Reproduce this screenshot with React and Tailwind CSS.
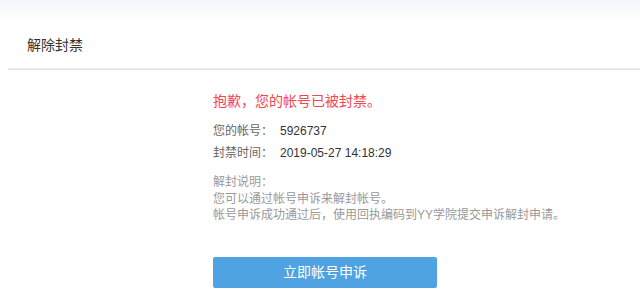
import React from 'react';

const font = { fontFamily: '"Liberation Sans", "Noto Sans CJK SC", sans-serif' };

export default function App() {
  const info = [
    { label: '您的帐号：', value: '5926737' },
    { label: '封禁时间：', value: '2019-05-27 14:18:29' },
  ];

  return (
    <div className="w-[640px] h-[297px] overflow-hidden bg-white" style={font}>
      {/* Header */}
      <div className="h-[22px] bg-gradient-to-b from-[#f3f6fa] to-white"></div>
      <div className="ml-2">
        <div className="h-[46px] flex items-center pl-[19px] pb-[1px]">
          <h1 className="text-[14px] leading-5 text-[#333]">解除封禁</h1>
        </div>
        <div className="h-px bg-[#f0f0f0]"></div>
        <div className="h-px bg-[#e2e2e2]"></div>
      </div>

      {/* Content */}
      <div className="pl-[213px] pt-[21px]">
        <p className="text-[14px] leading-5 text-[#f2474d]">抱歉，您的帐号已被封禁。</p>

        <div className="mt-[9px]">
          {info.map((row) => (
            <div key={row.label} className="flex text-[12px] leading-[22px]">
              <span className="w-[67px] text-[#666]">{row.label}</span>
              <span className="text-[#333]">{row.value}</span>
            </div>
          ))}
        </div>

        <div className="mt-[10px] text-[12px] leading-[16.5px] text-[#999]">
          <p>解封说明：</p>
          <p>您可以通过帐号申诉来解封帐号。</p>
          <p>帐号申诉成功通过后，使用回执编码到YY学院提交申诉解封申请。</p>
        </div>

        <button className="mt-[33px] w-[224px] h-[31px] rounded-[2px] bg-[#4fa3e3] text-white text-[14px]">
          立即帐号申诉
        </button>
      </div>
    </div>
  );
}
